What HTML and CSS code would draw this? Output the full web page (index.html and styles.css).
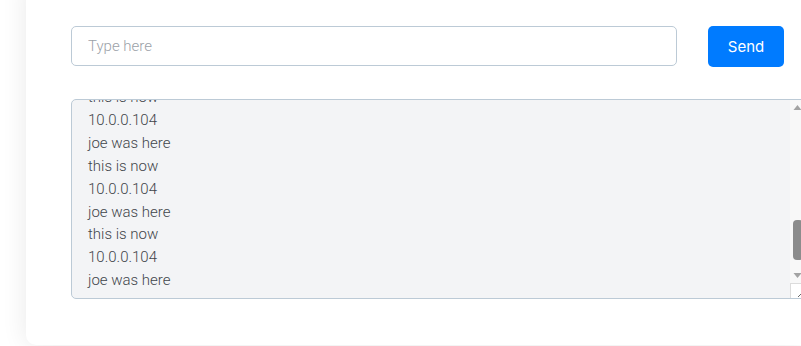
FILE: index.html
```html
<!DOCTYPE html>
<html>
<head>
<meta charset="utf-8">
<link rel="stylesheet" href="styles.css">
</head>
<body>
<div class="card">
  <div class="send-row">
    <input class="msg-input" type="text" placeholder="Type here">
    <button class="send-btn">Send</button>
  </div>
  <div class="log">
    <div class="log-lines">
      <div>this is now</div>
      <div>10.0.0.104</div>
      <div>joe was here</div>
      <div>this is now</div>
      <div>10.0.0.104</div>
      <div>joe was here</div>
      <div>this is now</div>
      <div>10.0.0.104</div>
      <div>joe was here</div>
    </div>
    <div class="scrollbar">
      <div class="sb-btn">
        <svg width="15" height="15" viewBox="0 0 15 15"><polygon points="3.5,10 7.5,5 11.5,10" fill="#a3a3a3"/></svg>
      </div>
      <div class="sb-track"><div class="sb-thumb"></div></div>
      <div class="sb-btn">
        <svg width="15" height="15" viewBox="0 0 15 15"><polygon points="3.5,5 11.5,5 7.5,10" fill="#a3a3a3"/></svg>
      </div>
      <div class="sb-resizer">
        <svg width="15" height="15" viewBox="0 0 15 15"><line x1="7" y1="13" x2="13" y2="7" stroke="#6b6b6b" stroke-width="1"/><line x1="11" y1="13" x2="13" y2="11" stroke="#6b6b6b" stroke-width="1"/></svg>
      </div>
    </div>
  </div>
</div>
</body>
</html>
```
FILE: styles.css
```css
html, body {
  margin: 0;
  padding: 0;
  background: #ffffff;
  overflow: hidden;
  height: 346px;
}
.card {
  margin-left: 26px;
  margin-top: -20px;
  width: 775px;
  box-sizing: border-box;
  padding: 46px 0 46px 45px;
  background: #ffffff;
  border-radius: 10px 0 0 10px;
  box-shadow: 0 0 26px rgba(0, 0, 0, 0.09);
  display: flex;
  flex-direction: column;
  gap: 32px;
  overflow: hidden;
}
.send-row {
  display: flex;
  gap: 31px;
  align-items: flex-start;
}
.msg-input {
  flex: none;
  width: 606px;
  height: 40px;
  box-sizing: border-box;
  border: 1px solid #bccad6;
  border-radius: 5px;
  padding: 0 16px;
  font-family: "Roboto", sans-serif;
  font-size: 15px;
  color: #495057;
  outline: none;
}
.msg-input::placeholder {
  color: #9ba1a8;
  font-weight: 300;
}
.send-btn {
  flex: none;
  width: 76px;
  height: 41px;
  border: none;
  border-radius: 5px;
  background: #007bff;
  color: #ffffff;
  font-family: "Inter", sans-serif;
  font-size: 15px;
  font-weight: 400;
  padding: 0;
}
.log {
  flex: none;
  width: 735px;
  height: 200px;
  box-sizing: border-box;
  border: 1px solid #bccad6;
  border-radius: 5px;
  background: #f3f4f6;
  display: flex;
  overflow: hidden;
}
.log-lines {
  flex: 1;
  display: flex;
  flex-direction: column;
  justify-content: flex-end;
  overflow: hidden;
  padding: 0 16px 6px 16px;
  font-family: "Roboto", sans-serif;
  font-size: 15px;
  font-weight: 300;
  line-height: 22.86px;
  color: #3f454b;
}
.log-lines div {
  flex: none;
}
.scrollbar {
  flex: none;
  width: 15px;
  display: flex;
  flex-direction: column;
  background: #f8f8f8;
}
.sb-btn {
  height: 15px;
  flex: none;
}
.sb-btn svg, .sb-resizer svg {
  display: block;
}
.sb-track {
  flex: 1;
  display: flex;
  flex-direction: column;
  justify-content: flex-end;
  padding: 0 2px 8px 3px;
}
.sb-thumb {
  height: 40px;
  background: #8c8c8c;
  border-radius: 4px;
}
.sb-resizer {
  height: 15px;
  flex: none;
  box-sizing: border-box;
  border-left: 1px solid #dcdcdc;
  border-top: 1px solid #dcdcdc;
  background: #ffffff;
}
```
